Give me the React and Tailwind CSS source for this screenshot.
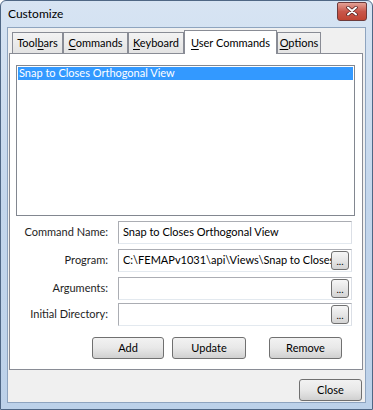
import React from 'react';

const font = { fontFamily: '"Segoe UI", Lato, "Noto Sans", sans-serif' };

const Tab = ({ children, w, active }) => (
    active ? (
        <div className={`relative z-10 -mb-px flex h-[24px] ${w} items-start justify-center whitespace-nowrap border border-b-0 border-[#898c95] bg-white pt-[4px] text-[11px] text-black`}>
            {children}
        </div>
    ) : (
        <div className={`flex h-[21px] ${w} items-center justify-center whitespace-nowrap border border-b-0 border-[#898c95] bg-gradient-to-b from-[#f3f3f3] to-[#e3e3e3] text-[11px] text-black`}>
            {children}
        </div>
    )
);

const U = ({ children }) => <span className="underline underline-offset-2">{children}</span>;

const Ellipsis = () => (
    <div className="flex h-[19px] w-[18px] shrink-0 items-end justify-center rounded-[3px] border border-[#707070] bg-gradient-to-b from-[#f6f6f6] via-[#e6e6e6] to-[#d4d4d4] pb-[3px] text-[10px] leading-none text-black">
        ...
    </div>
);

const Field = ({ label, value, browse, mt }) => (
    <div className={`flex items-center ${mt}`}>
        <div className="w-[93px] whitespace-nowrap pr-[1px] text-right text-[11px] text-[#1e1e1e]">{label}</div>
        <div className="ml-[9px] flex h-[23px] w-[234px] items-center border border-[#abadb3] border-b-[#e3e9ef] border-r-[#dbdfe6] bg-white pl-[4px] pr-[2px]">
            <div className="min-w-0 flex-1 overflow-hidden whitespace-nowrap text-[11px] text-black">{value}</div>
            {browse && <Ellipsis />}
        </div>
    </div>
);

const Btn = ({ children, w }) => (
    <button className={`flex h-[22px] ${w} items-center justify-center rounded-[3px] border border-[#707070] bg-gradient-to-b from-[#f2f2f2] via-[#e8e8e8] to-[#d0d0d0] text-[11px] text-black`}>
        {children}
    </button>
);

export default function App() {
    return (
        <div className="h-[410px] w-[373px] bg-white" style={font}>
            <div className="flex h-[410px] w-[373px] flex-col rounded-t-[6px] border border-[#4f6785] bg-gradient-to-b from-[#d7e4f3] via-[#c3d6ec] to-[#bcd1e9]">
                {/* title bar */}
                <div className="flex h-[26px] items-center justify-between pl-[7px] pr-[5px]">
                    <span className="text-[12px] text-black">Customize</span>
                    <div className="mt-[-6px] flex h-[19px] w-[30px] items-center justify-center rounded-b-[3px] rounded-t-[2px] border border-[#6d3a3a] bg-gradient-to-b from-[#e3a196] via-[#c8564a] to-[#c04432]">
                        <svg width="12" height="10" viewBox="0 0 12 10">
                            <path d="M2 1.5 L10 8.5 M10 1.5 L2 8.5" stroke="#4a1a1a" strokeWidth="3.4" strokeLinecap="round" />
                            <path d="M2 1.5 L10 8.5 M10 1.5 L2 8.5" stroke="#ffffff" strokeWidth="2" strokeLinecap="round" />
                        </svg>
                    </div>
                </div>

                {/* client area */}
                <div className="mx-[6px] flex h-[376px] flex-col border border-[#8ea4bf] bg-[#f0f0f0]">
                    {/* tab strip */}
                    <div className="flex items-end pl-[4px] pt-[2px]">
                        <Tab w="w-[51px]"><span>Tool<U>b</U>ars</span></Tab>
                        <Tab w="w-[65px]"><span><U>C</U>ommands</span></Tab>
                        <Tab w="w-[56px]"><span><U>K</U>eyboard</span></Tab>
                        <Tab w="w-[93px]" active><span><U>U</U>ser Commands</span></Tab>
                        <Tab w="w-[44px]"><span><U>O</U>ptions</span></Tab>
                    </div>

                    {/* tab panel */}
                    <div className="ml-[1px] flex h-[317px] w-[354px] flex-col border border-[#898c95] bg-white pl-[6px] pt-[11px]">
                        <div className="h-[151px] w-[339px] border border-[#828790] bg-white p-px">
                            <div className="flex h-[13px] items-center bg-[#3399ff] pl-[1px] text-[11px] text-white">
                                Snap to Closes Orthogonal View
                            </div>
                        </div>

                        <Field mt="mt-[5px]" label="Command Name:" value="Snap to Closes Orthogonal View" />
                        <Field mt="mt-[5px]" label="Program:" value="C:\FEMAPv1031\api\Views\Snap to Closes Orthogonal View.BAS" browse />
                        <Field mt="mt-[5px]" label="Arguments:" value="" browse />
                        <Field mt="mt-[3px]" label="Initial Directory:" value="" browse />

                        <div className="mt-[11px] flex pl-[76px]">
                            <Btn w="w-[72px]">Add</Btn>
                            <div className="w-[8px]" />
                            <Btn w="w-[74px]">Update</Btn>
                            <div className="w-[23px]" />
                            <Btn w="w-[73px]">Remove</Btn>
                        </div>
                    </div>

                    <div className="mt-[9px] flex justify-end pr-[3px]">
                        <Btn w="w-[63px]">Close</Btn>
                    </div>
                </div>
            </div>
        </div>
    );
}
